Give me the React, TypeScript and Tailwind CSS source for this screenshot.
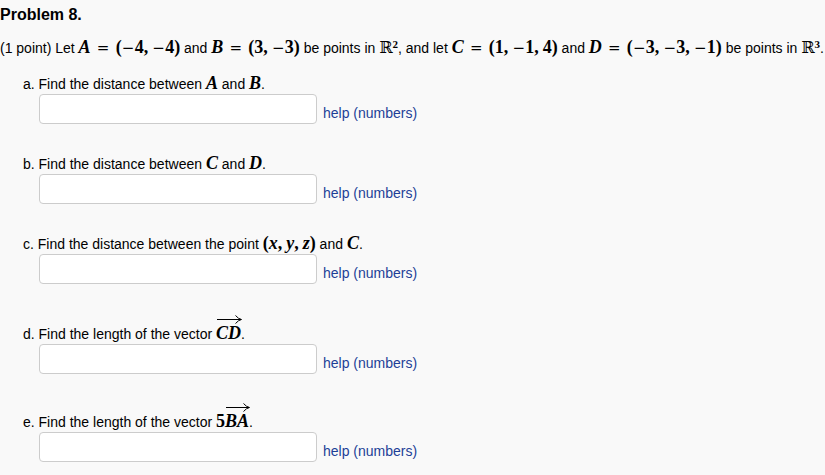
import type { ReactNode } from 'react';

function M({ children }: { children: ReactNode }) {
  return <span className="font-['Liberation_Serif','DejaVu_Serif',serif] text-[18px] font-bold leading-[16px]">{children}</span>;
}

function V({ children }: { children: ReactNode }) {
  return <i className="font-bold">{children}</i>;
}

// wide, thin operators, like the TeX font
function Eq() {
  return <span className="mx-[6px] inline-block w-[13px] text-center font-['DejaVu_Serif',serif] text-[15px] font-normal">=</span>;
}

function Mi() {
  return <span className="inline-block w-[13px] text-center font-['DejaVu_Serif',serif] text-[15px] font-normal">−</span>;
}

function C() {
  return <span className="mr-[4px]">,</span>;
}

function Reals({ n }: { n: number }) {
  return (
    <M>
      <span className="font-['DejaVu_Serif',serif] text-[16px] font-normal">ℝ</span>
      <sup className="text-[11px] leading-none">{n}</sup>
    </M>
  );
}

function Vec({ children }: { children: ReactNode }) {
  return (
    <span className="relative inline-block">
      {children}
      {/* arrow over the vector */}
      <span className="absolute -top-[10px] left-[1px] -right-[1px] flex items-center">
        <span className="h-px flex-1 bg-black" />
        <svg width="7" height="9" viewBox="0 0 7 9" className="-ml-[6px]">
          <path d="M0.5 0.5 Q3.5 4 6.5 4.5 Q3.5 5 0.5 8.5" fill="none" stroke="black" strokeWidth="1" />
        </svg>
      </span>
    </span>
  );
}

const parts: { label: ReactNode; gap: string }[] = [
  {
    label: (
      <>
        a. Find the distance between <M><V>A</V></M> and <M><V>B</V></M>.
      </>
    ),
    gap: 'mt-[17px]',
  },
  {
    label: (
      <>
        b. Find the distance between <M><V>C</V></M> and <M><V>D</V></M>.
      </>
    ),
    gap: 'mt-[31px]',
  },
  {
    label: (
      <>
        c. Find the distance between the point <M>(<V>x</V><C /><V>y</V><C /><V>z</V>)</M> and <M><V>C</V></M>.
      </>
    ),
    gap: 'mt-[31px]',
  },
  {
    label: (
      <>
        d. Find the length of the vector <M><Vec><V>CD</V></Vec></M>.
      </>
    ),
    gap: 'mt-[41px]',
  },
  {
    label: (
      <>
        e. Find the length of the vector <M>5<Vec><V>BA</V></Vec></M>.
      </>
    ),
    gap: 'mt-[39px]',
  },
];

export default function App() {
  return (
    <div className="min-h-screen bg-[#f9f9f9] font-['Liberation_Sans',Arial,sans-serif] text-[14px] text-black">
      <h1 className="pt-[5px] text-[16px] font-bold leading-[20px]">Problem 8.</h1>
      <p className="mt-[13px] leading-[20px] whitespace-nowrap">
        (1 point) Let <M><V>A</V><Eq />(<Mi />4<C /><Mi />4)</M> and <M><V>B</V><Eq />(3<C /><Mi />3)</M> be points in <Reals n={2} />, and let{' '}
        <M><V>C</V><Eq />(1<C /><Mi />1<C />4)</M> and <M><V>D</V><Eq />(<Mi />3<C /><Mi />3<C /><Mi />1)</M> be points in <Reals n={3} />.
      </p>

      {parts.map((p, i) => (
        <div key={i} className={p.gap}>
          <div className="ml-[23px] leading-[18px]">{p.label}</div>
          <div className="ml-[39px] mt-px flex items-end">
            <input type="text" className="h-[30px] w-[278px] rounded-[4px] border border-[#cccccc] bg-white outline-none" />
            <a href="#" className="mb-[2px] ml-[6px] leading-[18px] text-[#1d3f97]">help (numbers)</a>
          </div>
        </div>
      ))}
    </div>
  );
}
